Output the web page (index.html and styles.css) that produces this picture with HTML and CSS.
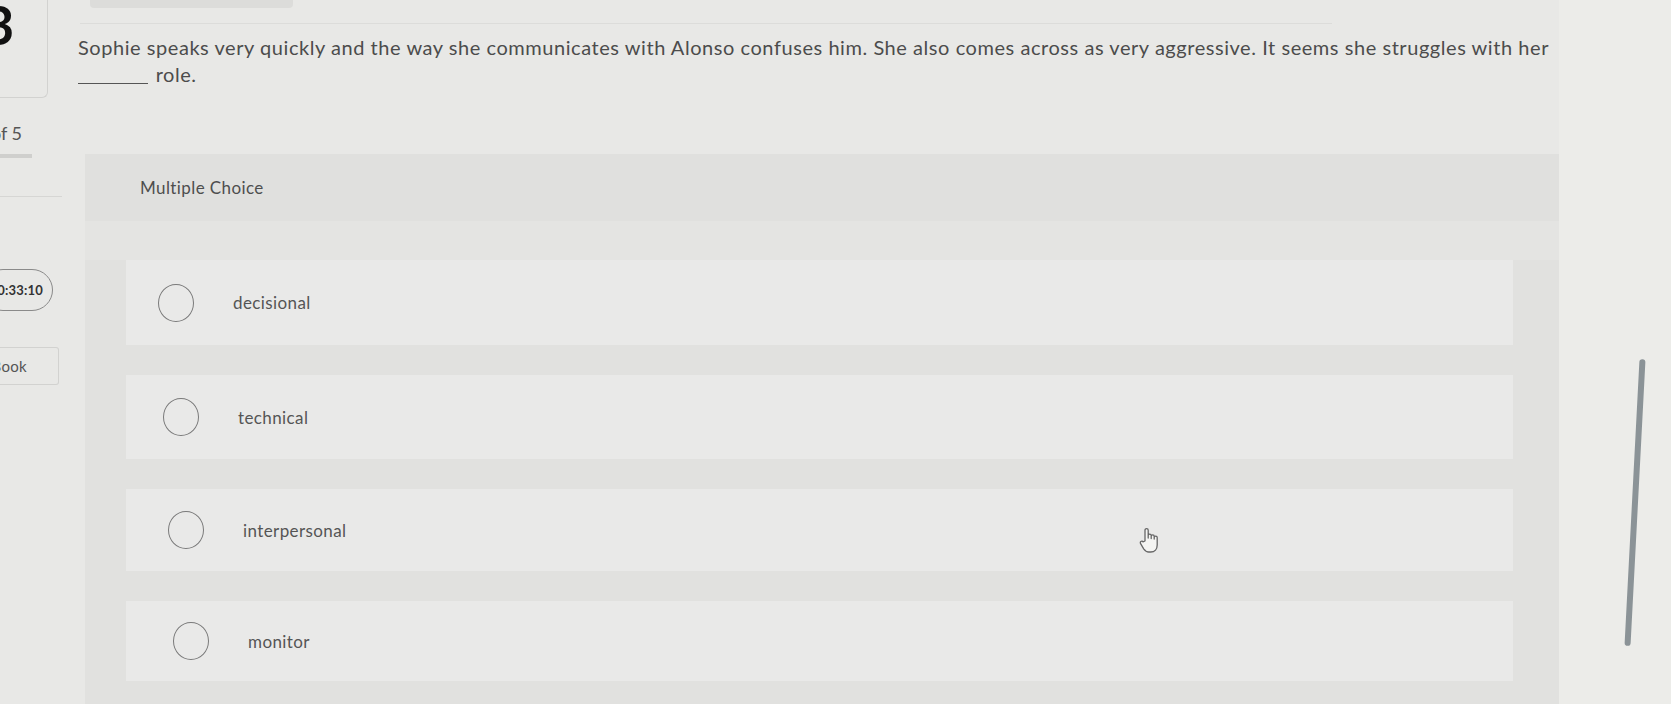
FILE: index.html
```html
<!DOCTYPE html>
<html lang="en">
<head>
<meta charset="utf-8">
<title>Multiple Choice</title>
<link rel="stylesheet" href="styles.css">
</head>
<body>
<div class="page">
  <aside class="sidebar">
    <div class="qcard"><span class="qnum">3</span></div>
    <div class="count">of 5</div>
    <div class="progress"></div>
    <div class="divider"></div>
    <div class="timer">0:33:10</div>
    <div class="ebook">eBook</div>
  </aside>
  <main class="main">
    <div class="topbox"></div>
    <div class="rule"></div>
    <p class="question">Sophie speaks very quickly and the way she communicates with Alonso confuses him. She also comes across as very aggressive. It seems she struggles with her <span class="blank"></span> role.</p>
    <section class="panel">
      <div class="panel-head">Multiple Choice</div>
      <div class="panel-band"></div>
      <div class="options">
        <div class="option o1"><span class="radio"></span><span class="label">decisional</span></div>
        <div class="option o2"><span class="radio"></span><span class="label">technical</span></div>
        <div class="option o3"><span class="radio"></span><span class="label">interpersonal</span></div>
        <div class="option o4"><span class="radio"></span><span class="label">monitor</span></div>
      </div>
    </section>
  </main>
  <div class="rightgutter"></div>
</div>
<div class="scrollthumb"></div>
<svg class="cursor" width="24" height="30" viewBox="0 0 24 30" aria-hidden="true">
  <path d="M7 15 V4.2 a1.6 1.6 0 0 1 3.2 0 V12 V9.6 a1.5 1.5 0 0 1 3 0 V12.5 V10.4 a1.5 1.5 0 0 1 3 0 V13 V11.6 a1.5 1.5 0 0 1 3 0 V19 c0 4 -2.4 7 -6.5 7 h-2 c-2.4 0 -3.6 -1.2 -5 -3.2 L2.6 17.6 a1.5 1.5 0 0 1 2.4 -1.8 Z" fill="#f4f4f2" stroke="#666" stroke-width="1.3" stroke-linejoin="round"/>
</svg>
</body>
</html>
```
FILE: styles.css
```css
* { box-sizing: border-box; }
html, body { margin: 0; padding: 0; }
body {
  width: 1671px;
  height: 704px;
  overflow: hidden;
  background: #e8e8e6;
  font-family: Lato, "Open Sans", "Liberation Sans", sans-serif;
  color: #4a4a4a;
  position: relative;
}
.page {
  display: grid;
  grid-template-columns: 78px 1481px 1fr;
  height: 704px;
}
.sidebar {
  overflow: hidden;
  display: flex;
  flex-direction: column;
  align-items: flex-start;
}
.qcard {
  width: 48px;
  height: 98px;
  border-right: 1px solid #d2d2d0;
  border-bottom: 1px solid #d2d2d0;
  border-bottom-right-radius: 6px;
  overflow: hidden;
}
.qnum {
  display: block;
  margin-left: -17px;
  margin-top: -4px;
  font-size: 54px;
  font-weight: 700;
  color: #111;
  line-height: 58px;
}
.count {
  margin-top: 24px;
  margin-left: -9px;
  font-size: 18px;
  line-height: 22px;
  color: #555;
}
.progress {
  margin-top: 10px;
  width: 32px;
  height: 4px;
  background: #cfcfcd;
}
.divider {
  margin-top: 38px;
  width: 62px;
  height: 1px;
  background: #d6d6d4;
}
.timer {
  margin-top: 72px;
  margin-left: -18px;
  width: 71px;
  height: 42px;
  border: 1.5px solid #8a8a8a;
  border-radius: 21px;
  display: flex;
  align-items: center;
  justify-content: flex-end;
  padding-right: 9px;
  font-size: 13px;
  font-weight: 700;
  letter-spacing: 0.2px;
  color: #333;
}
.ebook {
  margin-top: 36px;
  margin-left: -34px;
  width: 93px;
  height: 38px;
  border: 1px solid #d2d2d0;
  border-left: none;
  border-radius: 3px;
  display: flex;
  align-items: center;
  justify-content: flex-end;
  padding-right: 31px;
  font-size: 15px;
  letter-spacing: 0.3px;
  color: #555;
}
.main {
  display: flex;
  flex-direction: column;
}
.topbox {
  margin-left: 12px;
  width: 203px;
  height: 8px;
  background: #dcdcda;
  border-bottom-left-radius: 4px;
  border-bottom-right-radius: 4px;
}
.rule {
  margin-top: 15px;
  margin-left: 2px;
  width: 1252px;
  height: 1px;
  background: #dcdcda;
}
.question {
  margin: 10px 0 0;
  width: 1490px;
  font-size: 20px;
  line-height: 27px;
  letter-spacing: 0.55px;
  color: #4c4c4c;
}
.blank {
  display: inline-block;
  width: 70px;
  border-bottom: 1.5px solid #555;
  margin-right: 2px;
  vertical-align: -2px;
}
.panel {
  margin-top: 66px;
  margin-left: 7px;
  width: 1474px;
  flex: 1;
  background: #e1e1df;
}
.panel-head {
  height: 67px;
  padding-left: 55px;
  display: flex;
  align-items: center;
  font-size: 17px;
  letter-spacing: 0.4px;
  color: #4e4e4e;
  background: #e0e0de;
}
.panel-band {
  height: 39px;
  background: #e4e4e2;
}
.options {
  display: flex;
  flex-direction: column;
  gap: 30px;
  padding: 0 46px 0 41px;
}
.option {
  height: 85px;
  background: #e9e9e8;
  display: flex;
  align-items: center;
  gap: 39px;
  padding-left: 32px;
  font-size: 17px;
  letter-spacing: 0.4px;
  color: #555;
}
.option.o2 { padding-left: 37px; height: 84px; }
.option.o3 { padding-left: 42px; height: 82px; }
.option.o4 { padding-left: 47px; height: 80px; }
.radio {
  width: 36px;
  height: 38px;
  border: 1.5px solid #7a7a7a;
  border-radius: 50%;
  flex: none;
}
.rightgutter {
  background: #ecece9;
}
.scrollthumb {
  position: absolute;
  left: 1632px;
  top: 359px;
  width: 6px;
  height: 287px;
  border-radius: 3px;
  background: #8b9397;
  transform: rotate(3deg);
}
.cursor {
  position: absolute;
  left: 1138px;
  top: 526px;
}
```
